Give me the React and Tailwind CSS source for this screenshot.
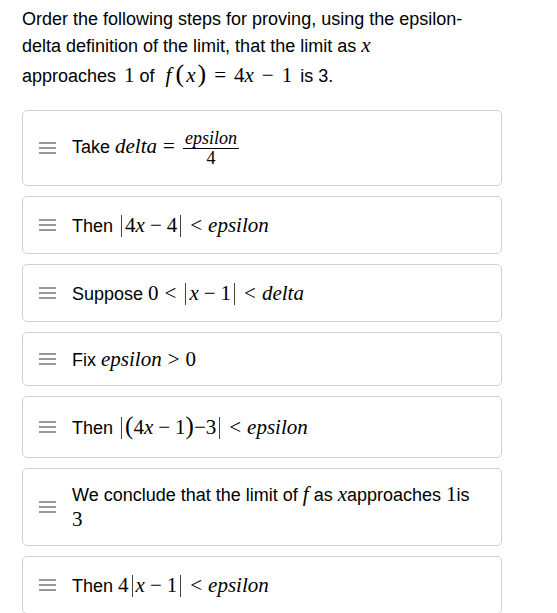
import React from "react";

const M = ({ children, className = "" }) => (
  <span className={`font-['Liberation_Serif',serif] text-[21px] ${className}`}>{children}</span>
);
const I = ({ children }) => <span className="italic">{children}</span>;
const Bar = () => <span className="inline-block w-px h-[22px] bg-[#444] align-[-5px] mx-[3px]" />;
const Op = ({ children }) => <span className="mx-[6px]">{children}</span>;
const Bin = ({ children }) => <span className="mx-[5px]">{children}</span>;

const Grip = () => (
  <span className="flex flex-col gap-[3px] w-[17px] shrink-0">
    <span className="h-[2px] bg-[#999]" />
    <span className="h-[2px] bg-[#999]" />
    <span className="h-[2px] bg-[#999]" />
  </span>
);

const Card = ({ children, h }) => (
  <div className={`flex items-center gap-4 border border-[#d0d0d0] rounded-[5px] pl-4 pr-4 ${h}`}>
    <Grip />
    <div className="text-[18px] leading-[24px] text-black">{children}</div>
  </div>
);

export default function App() {
  return (
    <div className="bg-white min-h-[613px] pl-[22px] pr-[55px] pt-[6px] font-['Liberation_Sans',Arial,sans-serif] text-black">
      <div className="text-[18px] leading-[26px] mb-[19px]">
        <p>Order the following steps for proving, using the epsilon-</p>
        <p>
          delta definition of the limit, that the limit as <M><I>x</I></M>
        </p>
        <p className="leading-[30px]">
          approaches <M className="ml-[3px]">1</M> of{" "}
          <M className="ml-[6px]">
            <I>f</I>
            <span className="text-[26px] ml-[4px] mr-[2px]">(</span>
            <I>x</I>
            <span className="text-[26px] ml-[2px]">)</span>
            <span className="mx-[8px]">=</span>4<I>x</I>
            <span className="mx-[8px]">−</span>1
          </M>{" "}
          <span className="ml-[3px]">is 3.</span>
        </p>
      </div>
      <div className="flex flex-col gap-[10px]">
        <Card h="h-[76px]">
          Take{" "}
          <M>
            <I>delta</I>
            <Op>=</Op>
            <span className="inline-flex flex-col items-center align-middle leading-[19px] text-[18px] ml-[2px]">
              <span className="italic px-[2px] border-b border-black">epsilon</span>
              <span>4</span>
            </span>
          </M>
        </Card>
        <Card h="h-[58px]">
          Then{" "}
          <M>
            <Bar />4<I>x</I>
            <Bin>−</Bin>4<Bar />
            <Op>&lt;</Op>
            <I>epsilon</I>
          </M>
        </Card>
        <Card h="h-[58px]">
          Suppose{" "}
          <M>
            0<Op>&lt;</Op>
            <Bar />
            <I>x</I>
            <Bin>−</Bin>1<Bar />
            <Op>&lt;</Op>
            <I>delta</I>
          </M>
        </Card>
        <Card h="h-[54px]">
          Fix{" "}
          <M>
            <I>epsilon</I>
            <Op>&gt;</Op>0
          </M>
        </Card>
        <Card h="h-[62px]">
          Then{" "}
          <M>
            <Bar />
            <span className="text-[25px]">(</span>4<I>x</I>
            <Bin>−</Bin>1<span className="text-[25px]">)</span>−3<Bar />
            <Op>&lt;</Op>
            <I>epsilon</I>
          </M>
        </Card>
        <Card h="h-[78px]">
          We conclude that the limit of <M><I>f</I></M> as <M><I>x</I></M>approaches <M>1</M>is
          <br />
          <M>3</M>
        </Card>
        <Card h="h-[58px]">
          Then{" "}
          <M>
            4<Bar />
            <I>x</I>
            <Bin>−</Bin>1<Bar />
            <Op>&lt;</Op>
            <I>epsilon</I>
          </M>
        </Card>
      </div>
    </div>
  );
}
